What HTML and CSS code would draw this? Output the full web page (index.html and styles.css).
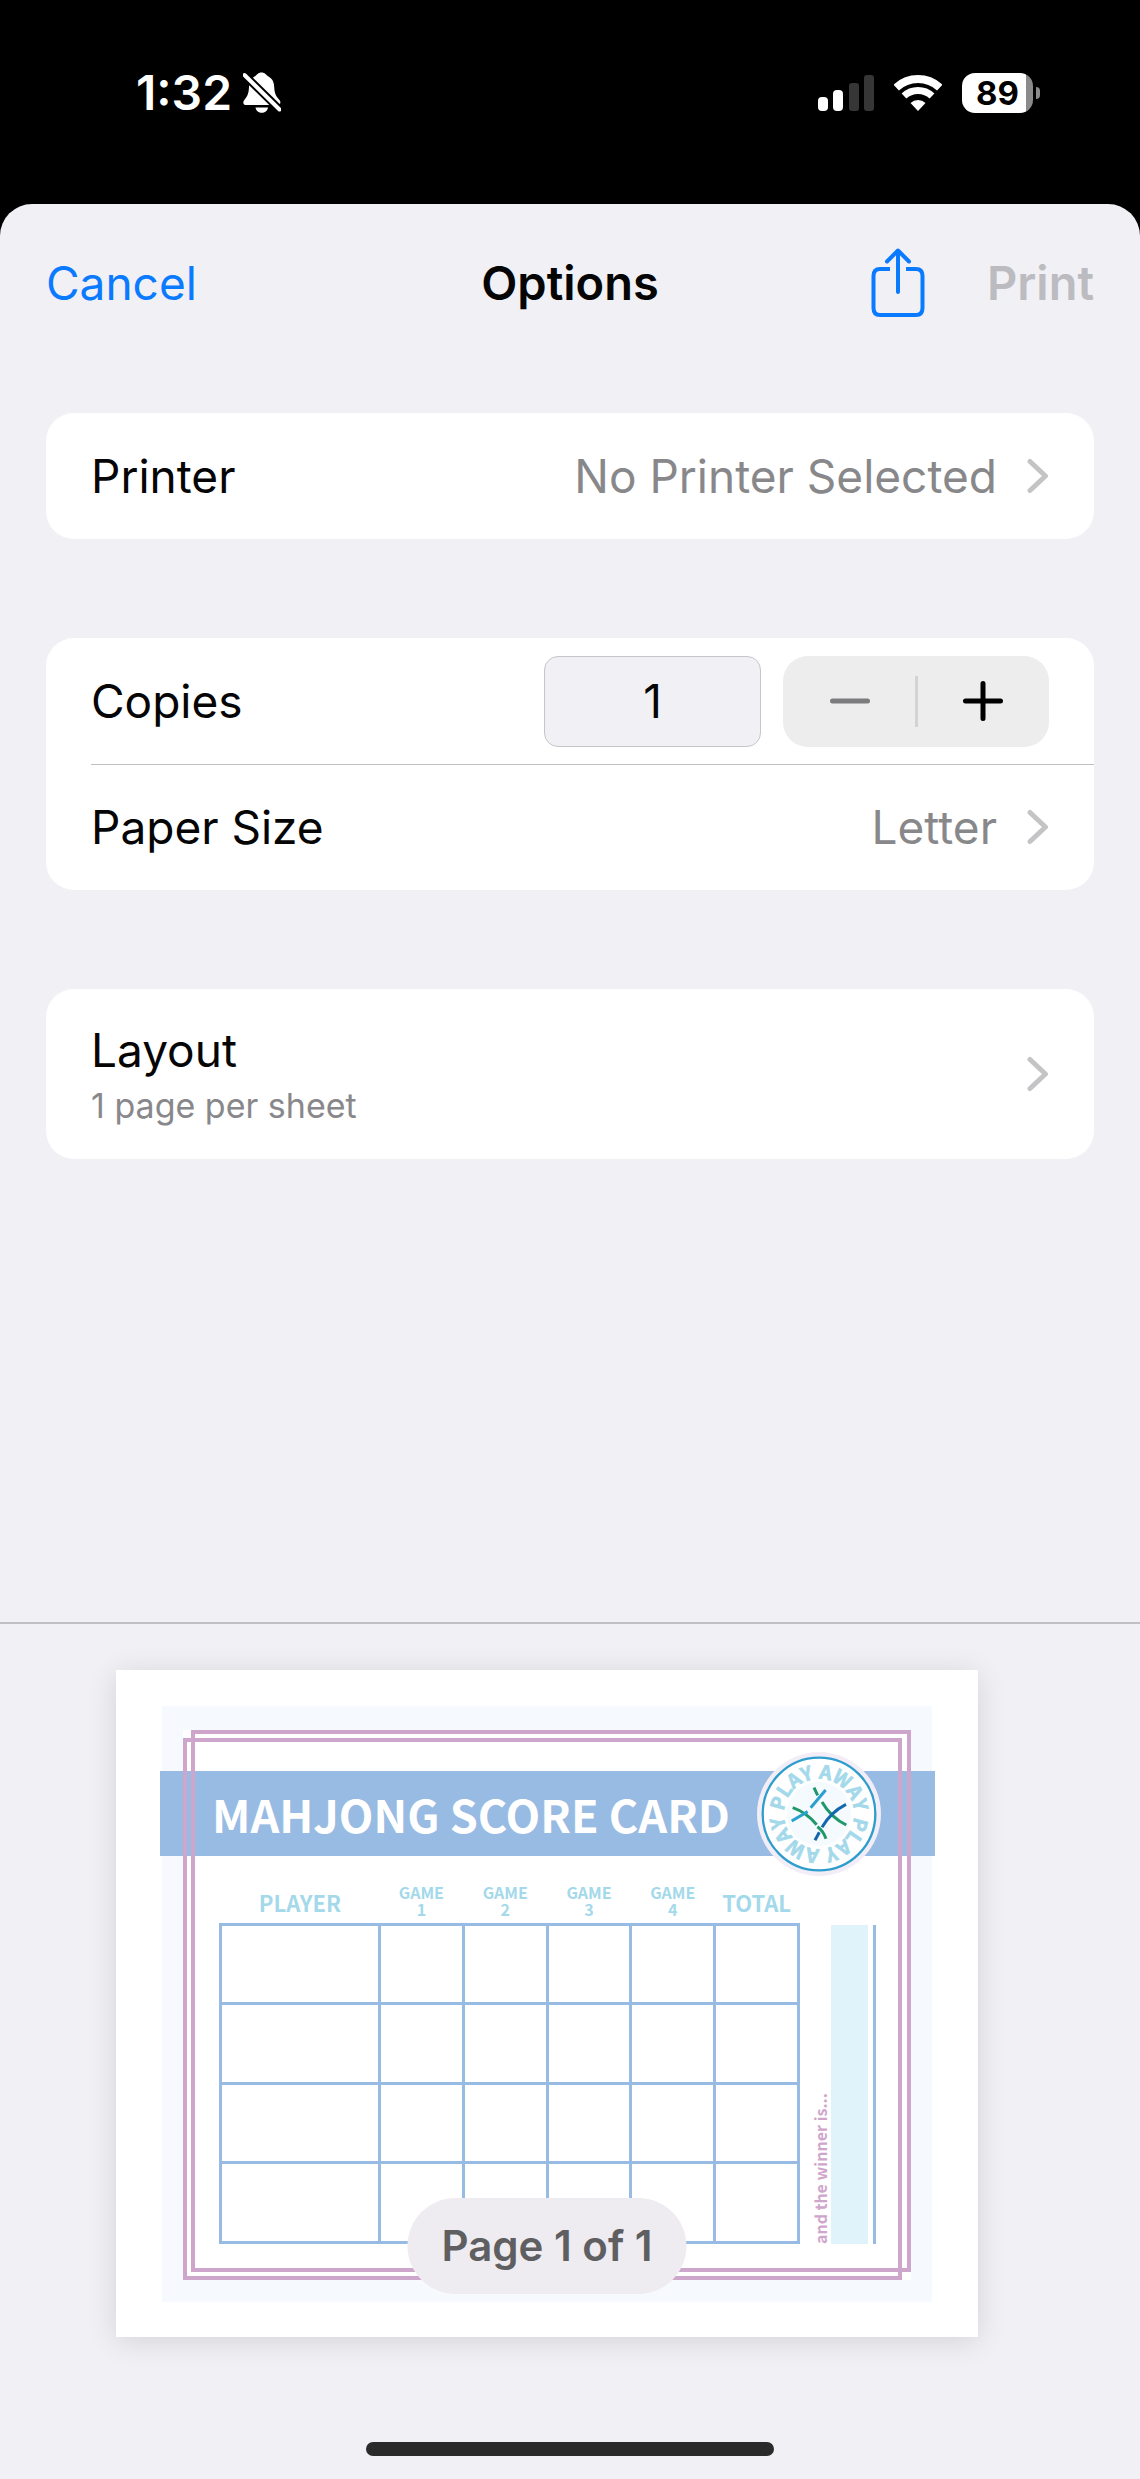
FILE: index.html
```html
<!DOCTYPE html>
<html lang="en">
<head>
<meta charset="utf-8">
<meta name="viewport" content="width=device-width">
<title>Print Options</title>
<link rel="stylesheet" href="styles.css">
</head>
<body>
<svg class="defs" width="0" height="0" aria-hidden="true">
  <symbol id="chevron" viewBox="0 0 22 36"><path d="M3 3.500L18.500 18L3 32.500" fill="none" stroke="currentColor" stroke-width="5" stroke-linecap="round" stroke-linejoin="round"/></symbol>
</svg>

<div class="status">
  <div class="status-group">
    <span class="time">1:32</span>
    <svg class="bell" width="38" height="42" viewBox="0 0 38 42" aria-label="Silent mode">
      <path d="M18.500 0.500C22 .5 23 3 25.500 4.500C29.500 7 31 10 31.200 15C31.500 23 34 25 36.500 28C38.500 31 37 33 34 33H3.500C.5 33-.5 31 1 28.500C3.500 25 5.700 23 6 15C6.200 10 8 6.500 11.500 4.500C14 3 15 .5 18.500 .5Z" fill="#fff"/>
      <path d="M12.500 35.500H25C24 42.500 13.500 42.500 12.500 35.500Z" fill="#fff"/>
      <path d="M1.500 3L37 38" stroke="#000" stroke-width="8"/>
      <path d="M1.500 3L36.500 37.500" stroke="#fff" stroke-width="4" stroke-linecap="round"/>
    </svg>
  </div>
  <div class="status-group status-right">
    <svg width="56" height="36" viewBox="0 0 56 36" aria-label="Signal">
      <rect x="0" y="22" width="10" height="14" rx="4" fill="#fff"/>
      <rect x="15" y="15" width="10" height="21" rx="4" fill="#fff"/>
      <rect x="31" y="8" width="10" height="28" rx="3" fill="#363636"/>
      <rect x="46" y="0" width="10" height="36" rx="3" fill="#363636"/>
    </svg>
    <svg width="48" height="36" viewBox="0 0 48 36" aria-label="Wi-Fi">
      <g fill="none" stroke="#fff"><path d="M2.200 12.600A32 32 0 0 1 45.800 12.600" stroke-width="8"/><path d="M10 21A20.500 20.500 0 0 1 38 21" stroke-width="7"/></g>
      <path d="M24 36L16.500 28A11 11 0 0 1 31.500 28Z" fill="#fff"/>
    </svg>
    <div class="battery"><span class="battery-body">89</span><span class="battery-cap"></span></div>
  </div>
</div>

<main class="sheet">
  <header class="nav">
    <button class="nav-button" type="button">Cancel</button>
    <h1>Options</h1>
    <div class="nav-actions">
      <button class="nav-button" type="button" aria-label="Share">
        <svg width="54" height="70" viewBox="0 0 54 70" fill="none" stroke="currentColor" stroke-width="4" stroke-linecap="round" stroke-linejoin="round"><path d="M19 21H9Q2.500 21 2.500 28V60Q2.500 67 9 67H45Q51.500 67 51.500 60V28Q51.500 21 45 21H35" stroke-linecap="butt"/><path d="M27 44V2.500M16 13.500L27 2.500L38 13.500"/></svg>
      </button>
      <button class="nav-button print" type="button" disabled>Print</button>
    </div>
  </header>

  <div class="settings">
    <section class="group">
      <button class="row" type="button"><span>Printer</span><span class="value">No Printer Selected</span><svg class="chevron"><use href="#chevron"/></svg></button>
    </section>
    <section class="group">
      <div class="row">
        <label for="copies">Copies</label>
        <input id="copies" class="copies" type="text" inputmode="numeric" value="1">
        <div class="stepper">
          <button type="button" aria-label="Fewer copies" disabled><svg width="40" height="40" viewBox="0 0 40 40"><path d="M2.500 20H37.500"/></svg></button>
          <button type="button" aria-label="More copies"><svg width="40" height="40" viewBox="0 0 40 40"><path d="M2.500 20H37.500M20 2.500V37.500"/></svg></button>
        </div>
      </div>
      <button class="row divided" type="button"><span>Paper Size</span><span class="value">Letter</span><svg class="chevron"><use href="#chevron"/></svg></button>
    </section>
    <section class="group">
      <button class="row tall" type="button"><span class="stack"><span>Layout</span><span class="detail">1 page per sheet</span></span><svg class="chevron"><use href="#chevron"/></svg></button>
    </section>
  </div>

  <section class="preview">
    <div class="paper">
      <article class="card">
        <div class="card-fill"></div>
        <div class="ribbon">
          <h2>MAHJONG SCORE CARD</h2>
          <svg class="badge" viewBox="52 65 372 372" aria-label="Play Away">
            <defs><path id="ring" d="M133 251A105 105 0 0 1 343 251A105 105 0 0 1 133 251"/></defs>
            <circle cx="238" cy="251" r="186" fill="#f3edf8"/>
            <circle cx="238" cy="251" r="169" fill="#fff" stroke="#2c9dcd" stroke-width="7"/>
            <circle cx="238" cy="251" r="96" fill="#f5fafe"/>
            <g class="badge-text">
              <text><textPath href="#ring" startOffset="8">PLAY AWAY</textPath></text>
              <text transform="rotate(180 238 251)"><textPath href="#ring" startOffset="8">PLAY AWAY</textPath></text>
            </g>
            <g fill="none" stroke-width="9">
              <path d="M223 172L234 195M247 215Q274 262 320 284M159 232Q200 246 231 283M233 289Q250 300 259 325" stroke="#20996a"/>
              <path d="M258 179L213 232M156 272L204 244" stroke="#2aa0cf"/>
              <path d="M319 222Q272 246 247 291M239 306L226 330" stroke="#1268ac"/>
            </g>
          </svg>
        </div>
        <div class="card-body">
          <table class="scores">
            <colgroup><col class="col-player"><col><col><col><col><col></colgroup>
            <thead><tr><th class="wide">PLAYER</th><th>GAME<br>1</th><th>GAME<br>2</th><th>GAME<br>3</th><th>GAME<br>4</th><th class="wide">TOTAL</th></tr></thead>
            <tbody>
              <tr><td></td><td></td><td></td><td></td><td></td><td></td></tr>
              <tr><td></td><td></td><td></td><td></td><td></td><td></td></tr>
              <tr><td></td><td></td><td></td><td></td><td></td><td></td></tr>
              <tr><td></td><td></td><td></td><td></td><td></td><td></td></tr>
            </tbody>
          </table>
          <div class="winner"><p>and the winner is...</p><div class="winner-box"></div><div class="winner-line"></div></div>
        </div>
      </article>
      <div class="page-count">Page 1 of 1</div>
    </div>
    <div class="home-indicator"></div>
  </section>
</main>
</body>
</html>
```
FILE: styles.css
```css
* { box-sizing: border-box; }

body {
  margin: 0;
  min-height: 100vh;
  display: flex;
  flex-direction: column;
  background: #000;
  color: #050505;
  font-family: Inter, "Liberation Sans", sans-serif;
  font-size: 46px;
  line-height: 56px;
}

button, input {
  margin: 0;
  padding: 0;
  border: 0;
  background: none;
  color: inherit;
  font: inherit;
}

svg { display: block; flex: none; }
.defs { position: absolute; }

/* Status bar */
.status {
  display: flex;
  justify-content: space-between;
  align-items: center;
  padding: 64px 100px 82px 136px;
  color: #fff;
}
.status-group { display: flex; align-items: center; gap: 11px; height: 58px; }
.status-right { gap: 20px; }
.time { font-size: 48px; font-weight: 600; }
.battery { display: flex; align-items: center; gap: 3px; }
.battery-body {
  width: 71px;
  height: 40px;
  border-radius: 13px;
  background: linear-gradient(to right, #fff 64px, #8a8a8a 64px);
  color: #000;
  font-size: 33px;
  font-weight: 700;
  line-height: 40px;
  text-align: center;
}
.battery-cap { width: 4px; height: 12px; border-radius: 0 4px 4px 0; background: #8a8a8a; }

/* Sheet */
.sheet {
  flex: 1;
  display: flex;
  flex-direction: column;
  border-radius: 32px 32px 0 0;
  background: #f1f0f5;
}
.nav {
  display: grid;
  grid-template-columns: 1fr auto 1fr;
  align-items: center;
  height: 158px;
  padding: 0 46px;
}
.nav h1 { margin: 0; font-size: 47px; font-weight: 600; }
.nav-button { color: #0a7aff; text-align: left; }
.nav-actions { display: flex; align-items: center; justify-content: flex-end; gap: 62px; }
.print { color: #bcbcc0; font-size: 47px; font-weight: 600; }

/* Grouped rows */
.settings {
  flex: 1;
  display: flex;
  flex-direction: column;
  gap: 99px;
  padding: 51px 46px;
}
.group { border-radius: 28px; background: #fff; }
.row {
  display: flex;
  align-items: center;
  width: 100%;
  min-height: 126px;
  padding: 0 45px;
  text-align: left;
}
.divided {
  background: linear-gradient(#c0c0c3, #c0c0c3) 45px 0 / 100% 1px no-repeat;
}
.tall { min-height: 170px; }
.value { margin-left: auto; color: #88888b; }
.chevron { width: 22px; height: 36px; margin-left: 30px; color: #c4c4c6; }
.stack { display: flex; flex-direction: column; flex: 1; padding-top: 8px; }
.detail { color: #88888b; font-size: 34px; }
.copies {
  width: 217px;
  height: 91px;
  margin-left: auto;
  border: 1px solid #c6c6ca;
  border-radius: 14px;
  background: #f1f0f5;
  text-align: center;
}
.stepper {
  display: flex;
  width: 266px;
  height: 91px;
  margin-left: 22px;
  border-radius: 25px;
  background: linear-gradient(#d3d3d5, #d3d3d5) center / 3px 51px no-repeat, #ededee;
}
.stepper button { flex: 1; display: grid; place-items: center; color: #000; }
.stepper button:disabled { color: #7c7c7e; }
.stepper path { fill: none; stroke: currentColor; stroke-width: 5; stroke-linecap: round; }

/* Preview */
.preview {
  border-top: 2px solid #bfbfc4;
  padding: 46px 162px 23px 116px;
}
.paper {
  position: relative;
  padding: 36px 46px 35px 46px;
  background: #fff;
  box-shadow: 0 4px 28px rgba(0, 0, 0, 0.12);
}
.page-count {
  position: absolute;
  left: 50%;
  bottom: 43px;
  transform: translateX(-50%);
  padding: 0 34px;
  border-radius: 48px;
  background: #eeecf0;
  color: #5f5f62;
  font-size: 42px;
  font-weight: 600;
  line-height: 96px;
  white-space: nowrap;
}
.home-indicator {
  width: 408px;
  height: 14px;
  margin: 105px auto 0 250px;
  border-radius: 7px;
  background: #2a2a2a;
}

/* Printed score card */
.card {
  position: relative;
  isolation: isolate;
  padding: 65px 0 58px;
  background: #f6fafe;
  font-family: "Noto Sans CJK JP", "Noto Sans", sans-serif;
  font-weight: 700;
}
.card::before,
.card::after {
  content: "";
  position: absolute;
  z-index: 1;
  border: 4px solid #cfa6cb;
  pointer-events: none;
}
.card::before { inset: 24px 21px 30px 29px; }
.card::after { inset: 32px 30px 22px 21px; }
.card-fill { position: absolute; z-index: -1; inset: 24px 21px 22px 21px; background: #fff; }
.ribbon {
  display: flex;
  align-items: center;
  justify-content: space-between;
  height: 85px;
  margin: 0 -3px 0 -2px;
  padding: 0 54px 0 52px;
  background: #98bbe3;
  color: #fff;
}
.ribbon h2 { margin: 0; font-size: 45px; font-weight: 700; white-space: nowrap; }
.badge { width: 124px; height: 124px; }
.badge-text { fill: #a3d9ea; stroke: #a3d9ea; stroke-width: 2; font-size: 58px; }
.card-body { display: flex; gap: 9px; padding: 0 56px 0 57px; }
.scores {
  flex: 1;
  width: 100%;
  height: 388px;
  border-collapse: collapse;
  table-layout: fixed;
}
.col-player { width: 159px; }
.scores th {
  height: 68px;
  padding: 0 0 5px;
  color: #a3d9ea;
  font-size: 16px;
  line-height: 17px;
  vertical-align: bottom;
}
.scores .wide { padding-bottom: 10px; font-size: 22px; line-height: 22px; }
.scores td { padding: 0; border: 3px solid #98bbe3; }
.winner { display: flex; align-items: stretch; padding-top: 69px; }
.winner p {
  margin: 0;
  color: #cfa6cb;
  font-size: 16px;
  line-height: 22px;
  white-space: nowrap;
  writing-mode: vertical-rl;
  transform: rotate(180deg);
}
.winner-box { width: 37px; background: #e0f2fa; }
.winner-line { width: 3px; margin-left: 5px; background: #98bbe3; }
```
